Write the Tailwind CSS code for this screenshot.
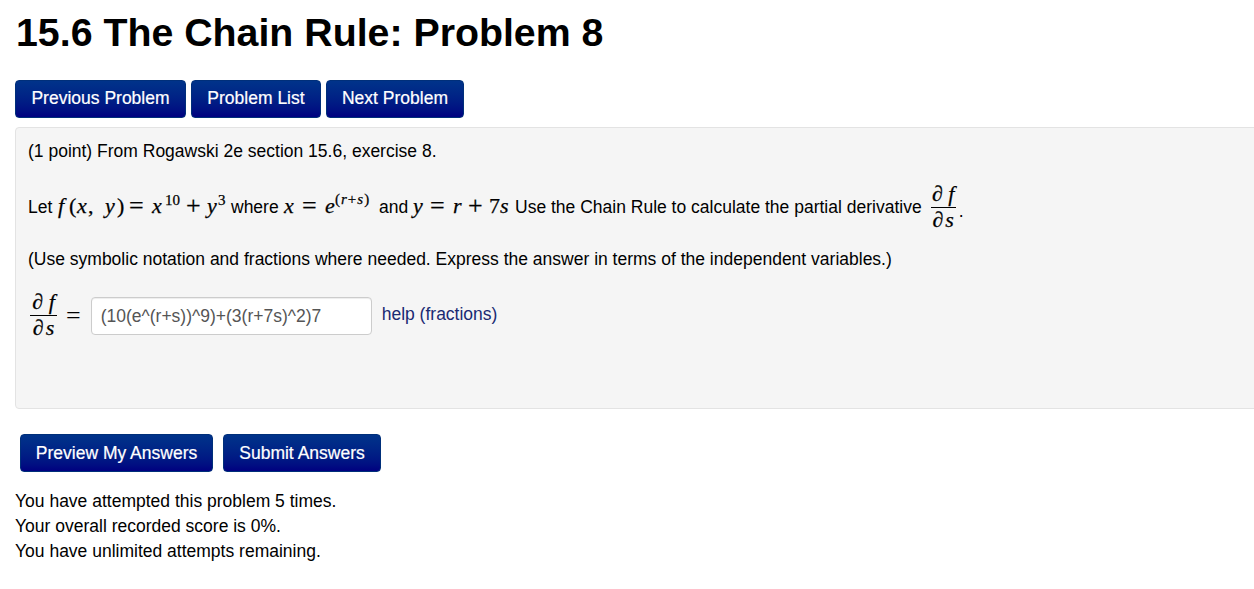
<!DOCTYPE html>
<html lang="en">
<head>
<meta charset="utf-8">
<title>15.6 The Chain Rule: Problem 8</title>
<script src="https://cdn.jsdelivr.net/npm/@tailwindcss/browser@4"></script>
</head>
<body class="h-[589px] w-[1254px] overflow-hidden bg-white font-['Liberation_Sans',Arial,sans-serif] text-[17.5px] leading-[25px] text-black">
<div class="pl-[15px]">
  <h1 class="pl-[1px] pt-[11px] text-[39.3px] font-bold leading-[42px]">15.6 The Chain Rule: Problem 8</h1>
  <div class="mt-[27px] flex h-[38px] gap-[5px]">
    <a class="flex w-[171px] items-center justify-center rounded-[4px] border border-[#002f7a] bg-gradient-to-b from-[#00338a] to-[#000080] pb-[2px] text-white [-webkit-text-stroke:0.2px_white]">Previous Problem</a>
    <a class="flex w-[130px] items-center justify-center rounded-[4px] border border-[#002f7a] bg-gradient-to-b from-[#00338a] to-[#000080] pb-[2px] text-white [-webkit-text-stroke:0.2px_white]">Problem List</a>
    <a class="flex w-[138px] items-center justify-center rounded-[4px] border border-[#002f7a] bg-gradient-to-b from-[#00338a] to-[#000080] pb-[2px] text-white [-webkit-text-stroke:0.2px_white]">Next Problem</a>
  </div>
  <div class="mt-[9px] h-[282px] w-[1260px] rounded-[4px] border border-[#e3e3e3] bg-[#f5f5f5] pl-[12px] pt-[11px]">
    <p>(1 point) From Rogawski 2e section 15.6, exercise 8.</p>
    <div class="mt-[18px] flex h-[50px] items-center whitespace-pre">
      <span class="flex items-baseline">
        <span class="w-[30px]">Let</span>
        <span class="flex items-baseline font-['Liberation_Serif',serif] text-[22px] [-webkit-text-stroke:0.25px_black]">
          <i class="w-[11px]">f</i><span class="w-[8px]">(</span><i class="w-[11px]">x</i><span class="w-[17px]">,</span><i class="w-[12px]">y</i><span class="w-[12px]">)</span><span class="w-[23px] translate-y-[1px] text-[26px] leading-[20px]">=</span><i class="w-[13px]">x</i><span class="w-[21px] -translate-y-[8px] text-[15px]">10</span><span class="w-[21px] translate-y-[1px] text-[26px] leading-[20px]">+</span><i class="w-[11px]">y</i><span class="w-[13px] -translate-y-[8px] text-[15px]">3</span>
        </span>
        <span class="w-[53px]">where</span>
        <span class="flex items-baseline font-['Liberation_Serif',serif] text-[22px] [-webkit-text-stroke:0.25px_black]">
          <i class="w-[18px]">x</i><span class="w-[23px] translate-y-[1px] text-[26px] leading-[20px]">=</span><i class="w-[10px]">e</i><span class="w-[44px] -translate-y-[9px] text-[15px] tracking-[1px]">(<i>r</i>+<i>s</i>)</span>
        </span>
        <span class="w-[34px]">and</span>
        <span class="flex items-baseline font-['Liberation_Serif',serif] text-[22px] [-webkit-text-stroke:0.25px_black]">
          <i class="w-[17px]">y</i><span class="w-[23px] translate-y-[1px] text-[26px] leading-[20px]">=</span><i class="w-[15px]">r</i><span class="w-[21px] translate-y-[1px] text-[26px] leading-[20px]">+</span><span class="w-[11px]">7</span><i class="w-[15px]">s</i>
        </span>
        <span>Use the Chain Rule to calculate the partial derivative</span>
      </span>
      <span class="ml-[9px] flex w-[25px] flex-col items-center font-['Liberation_Serif',serif] text-[22px] leading-[24px] [-webkit-text-stroke:0.25px_black]"><span class="w-full border-b border-black pb-[1px] text-center">∂ <i>f</i></span><span class="text-center">∂<i class="ml-[2px]">s</i></span></span>
      <span class="ml-[3px] mt-[8px]">.</span>
    </div>
    <p class="mt-[15px]">(Use symbolic notation and fractions where needed. Express the answer in terms of the independent variables.)</p>
    <div class="mt-[18px] flex items-center pl-[2px]">
      <span class="mb-[2px] flex w-[27px] flex-col items-center font-['Liberation_Serif',serif] text-[22px] leading-[24px] [-webkit-text-stroke:0.25px_black]"><span class="w-full border-b border-black pb-[1px] text-center">∂ <i>f</i></span><span class="text-center">∂<i class="ml-[2px]">s</i></span></span>
      <span class="ml-[9px] font-['Liberation_Serif',serif] text-[26px] leading-[36px]">=</span>
      <input class="ml-[10px] h-[38px] w-[281px] rounded-[4px] border border-[#cccccc] bg-white px-[9px] text-[17.5px] text-[#555555] shadow-[inset_0_1px_1px_rgba(0,0,0,0.075)]" value="(10(e^(r+s))^9)+(3(r+7s)^2)7">
      <a class="mb-[4px] ml-[10px] text-[#1a2a73]">help (fractions)</a>
    </div>
  </div>
  <div class="ml-[5px] mt-[25px] flex h-[38px] gap-[10px]">
    <a class="flex w-[193px] items-center justify-center rounded-[4px] border border-[#002f7a] bg-gradient-to-b from-[#00338a] to-[#000080] text-white [-webkit-text-stroke:0.2px_white]">Preview My Answers</a>
    <a class="flex w-[158px] items-center justify-center rounded-[4px] border border-[#002f7a] bg-gradient-to-b from-[#00338a] to-[#000080] text-white [-webkit-text-stroke:0.2px_white]">Submit Answers</a>
  </div>
  <div class="mt-[17px]">
    <p>You have attempted this problem 5 times.</p>
    <p>Your overall recorded score is 0%.</p>
    <p>You have unlimited attempts remaining.</p>
  </div>
</div>
</body>
</html>
